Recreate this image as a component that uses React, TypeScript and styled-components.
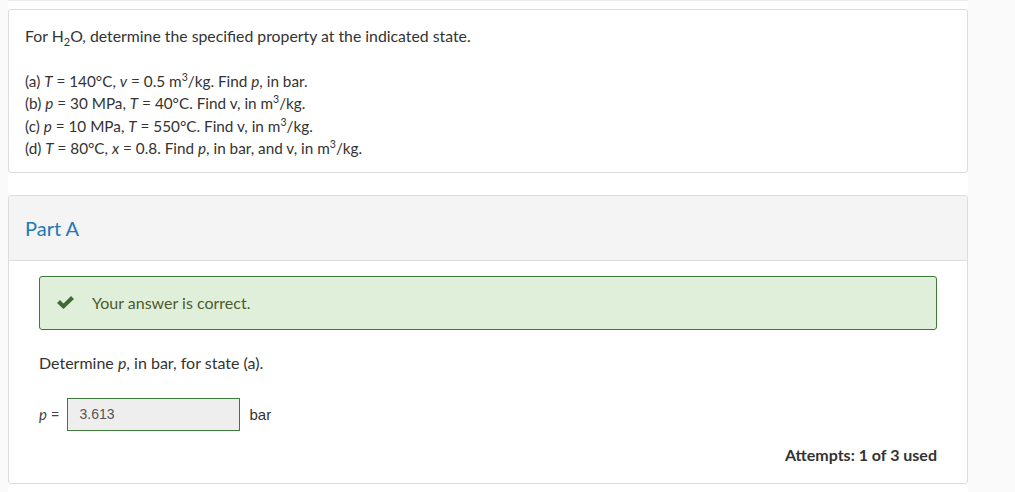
import { FC } from 'react';
import styled, { createGlobalStyle } from 'styled-components';

const GlobalStyle = createGlobalStyle`
  html, body {
    margin: 0;
    padding: 0;
    background: #fafafa;
  }
  body {
    font-family: Lato, "Open Sans", sans-serif;
    color: #333;
  }
`;

const Page = styled.div`
  width: 960px;
  margin-left: 8px;
  min-height: 492px;
  background: #fff;
  border-top: 1px solid #ececec;
  padding-top: 8px;
  box-sizing: border-box;
  display: flex;
  flex-direction: column;
  gap: 22px;
`;

const Card = styled.div`
  border: 1px solid #dcdcdc;
  border-radius: 3px;
  background: #fff;
  overflow: hidden;
`;

const Intro = styled.div`
  padding: 15px 16px 12px;
  font-size: 15.3px;
  line-height: 22.5px;
`;

const Para = styled.p<{ $gap?: number; $size?: number }>`
  margin: 0 0 ${({ $gap }) => $gap ?? 0}px;
  ${({ $size }) => ($size ? `font-size: ${$size}px;` : '')}
`;

const PartHeader = styled.div`
  background: #f4f4f4;
  border-bottom: 1px solid #dcdcdc;
  height: 65px;
  display: flex;
  align-items: center;
  padding: 0 16px;
  color: #2378b5;
  font-size: 20px;
  box-sizing: border-box;
`;

const PartBody = styled.div`
  padding: 15px 30px 17px;
  display: flex;
  flex-direction: column;
`;

const Feedback = styled.div`
  height: 54px;
  box-sizing: border-box;
  border: 1px solid #3e7b3b;
  border-radius: 3px;
  background: #dfefd9;
  display: flex;
  align-items: center;
  padding-left: 16px;
  gap: 17px;
  color: #4e5a2c;
  font-size: 16px;
`;

const Prompt = styled.p`
  margin: 22px 0 0;
  font-size: 16px;
  line-height: 22px;
`;

const AnswerRow = styled.div`
  margin-top: 24px;
  display: flex;
  align-items: center;
  gap: 8px;
  font-size: 15px;
`;

const Label = styled.span`
  white-space: nowrap;
  color: #444;
`;

const Input = styled.div`
  width: 173px;
  height: 33px;
  box-sizing: border-box;
  border: 1px solid #3e7b3b;
  background: #eeeeee;
  display: flex;
  align-items: center;
  padding-left: 11px;
  font-family: "Liberation Sans", Arial, sans-serif;
  font-size: 14px;
  color: #555;
`;

const Unit = styled.span`
  font-family: "Liberation Sans", Arial, sans-serif;
  font-size: 15px;
  color: #333;
  margin-left: 1px;
`;

const Attempts = styled.div`
  margin-top: 13px;
  align-self: flex-end;
  font-weight: 700;
  font-size: 16px;
  line-height: 22px;
  color: #333;
`;

const Check: FC = () => (
  <svg width="19" height="15" viewBox="0 0 19 15">
    <path d="M1 8 L4 5 L7.5 8.5 L15 1 L18 4 L7.5 14 Z" fill="#3d6b33" />
  </svg>
);

const Cube = () => <sup style={{ fontSize: '10.5px', lineHeight: 0 }}>3</sup>;

const App: FC = () => (
  <>
    <GlobalStyle />
    <Page>
      <Card>
        <Intro>
          <Para $gap={22} $size={15.8}>
            For H<sub style={{ fontSize: '11px', lineHeight: 0 }}>2</sub>O, determine the specified property at the indicated state.
          </Para>
          <Para>(a) <i>T</i> = 140°C, <i>v</i> = 0.5 m<Cube />/kg. Find <i>p</i>, in bar.</Para>
          <Para>(b) <i>p</i> = 30 MPa, <i>T</i> = 40°C. Find v, in m<Cube />/kg.</Para>
          <Para>(c) <i>p</i> = 10 MPa, <i>T</i> = 550°C. Find v, in m<Cube />/kg.</Para>
          <Para>(d) <i>T</i> = 80°C, <i>x</i> = 0.8. Find <i>p</i>, in bar, and v, in m<Cube />/kg.</Para>
        </Intro>
      </Card>
      <Card>
        <PartHeader>Part A</PartHeader>
        <PartBody>
          <Feedback>
            <Check />
            Your answer is correct.
          </Feedback>
          <Prompt>Determine <i>p</i>, in bar, for state (a).</Prompt>
          <AnswerRow>
            <Label><i>p</i> =</Label>
            <Input>3.613</Input>
            <Unit>bar</Unit>
          </AnswerRow>
          <Attempts>Attempts: 1 of 3 used</Attempts>
        </PartBody>
      </Card>
    </Page>
  </>
);

export default App;
